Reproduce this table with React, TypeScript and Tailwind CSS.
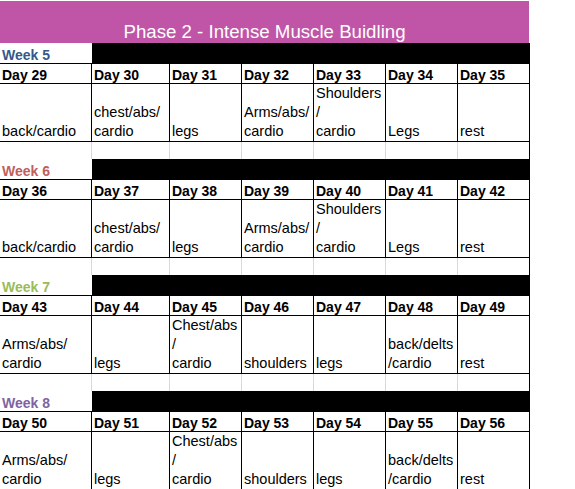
type Week = {
  label: string;
  color: string;
  start: number;
  plans: string[][];
};

const weeks: Week[] = [
  {
    label: "Week 5",
    color: "text-[#34598a]",
    start: 29,
    plans: [
      ["back/cardio"],
      ["chest/abs/", "cardio"],
      ["legs"],
      ["Arms/abs/", "cardio"],
      ["Shoulders", "/", "cardio"],
      ["Legs"],
      ["rest"],
    ],
  },
  {
    label: "Week 6",
    color: "text-[#c0605c]",
    start: 36,
    plans: [
      ["back/cardio"],
      ["chest/abs/", "cardio"],
      ["legs"],
      ["Arms/abs/", "cardio"],
      ["Shoulders", "/", "cardio"],
      ["Legs"],
      ["rest"],
    ],
  },
  {
    label: "Week 7",
    color: "text-[#9bbb59]",
    start: 43,
    plans: [
      ["Arms/abs/", "cardio"],
      ["legs"],
      ["Chest/abs", "/", "cardio"],
      ["shoulders"],
      ["legs"],
      ["back/delts", "/cardio"],
      ["rest"],
    ],
  },
  {
    label: "Week 8",
    color: "text-[#8064a2]",
    start: 50,
    plans: [
      ["Arms/abs/", "cardio"],
      ["legs"],
      ["Chest/abs", "/", "cardio"],
      ["shoulders"],
      ["legs"],
      ["back/delts", "/cardio"],
      ["rest"],
    ],
  },
];

const cols = "grid grid-cols-[92px_78px_72px_72px_72px_72px_72px]";

function WeekBlock({ week, last }: { week: Week; last: boolean }) {
  return (
    <div>
      {/* week label + black bar */}
      <div className="flex h-[20px]">
        <div className={`flex w-[92px] items-end pl-[2px] text-[14px] font-bold leading-[16px] ${week.color}`}>
          {week.label}
        </div>
        <div className="w-[438px] bg-black" />
      </div>

      {/* day numbers */}
      <div className={`${cols} h-[21px] border-y border-black`}>
        {week.plans.map((_, i) => (
          <div
            key={i}
            className="flex items-end border-r border-black pl-[2px] text-[14px] font-bold leading-[16px] text-black"
          >
            Day {week.start + i}
          </div>
        ))}
      </div>

      {/* workouts */}
      <div className={`${cols} h-[58px] border-b border-black`}>
        {week.plans.map((lines, i) => (
          <div
            key={i}
            className="flex flex-col justify-end border-r border-black pl-[2px] text-[14.5px] leading-[19px] text-black"
          >
            {lines.map((l, j) => (
              <span key={j} className="whitespace-nowrap">
                {l}
              </span>
            ))}
          </div>
        ))}
      </div>

      {/* spacer row with sheet gridlines */}
      {!last && (
        <div className={`${cols} h-[17px]`}>
          {week.plans.map((_, i) => (
            <div
              key={i}
              className={i === 6 ? "border-r border-black" : "border-r border-[#d9d9d9]"}
            />
          ))}
        </div>
      )}
    </div>
  );
}

export default function App() {
  return (
    <div className="h-[489px] w-[575px] overflow-hidden bg-white pt-px font-['Liberation_Sans',Arial,sans-serif]">
      <div className="w-[530px]">
        <div className="flex h-[42px] w-[529px] items-end justify-center bg-[#c055a7] pb-[1px] text-[18.67px] leading-[20px] text-white">
          Phase 2 - Intense Muscle Buidling
        </div>
        {weeks.map((w, i) => (
          <WeekBlock key={w.label} week={w} last={i === weeks.length - 1} />
        ))}
      </div>
    </div>
  );
}
